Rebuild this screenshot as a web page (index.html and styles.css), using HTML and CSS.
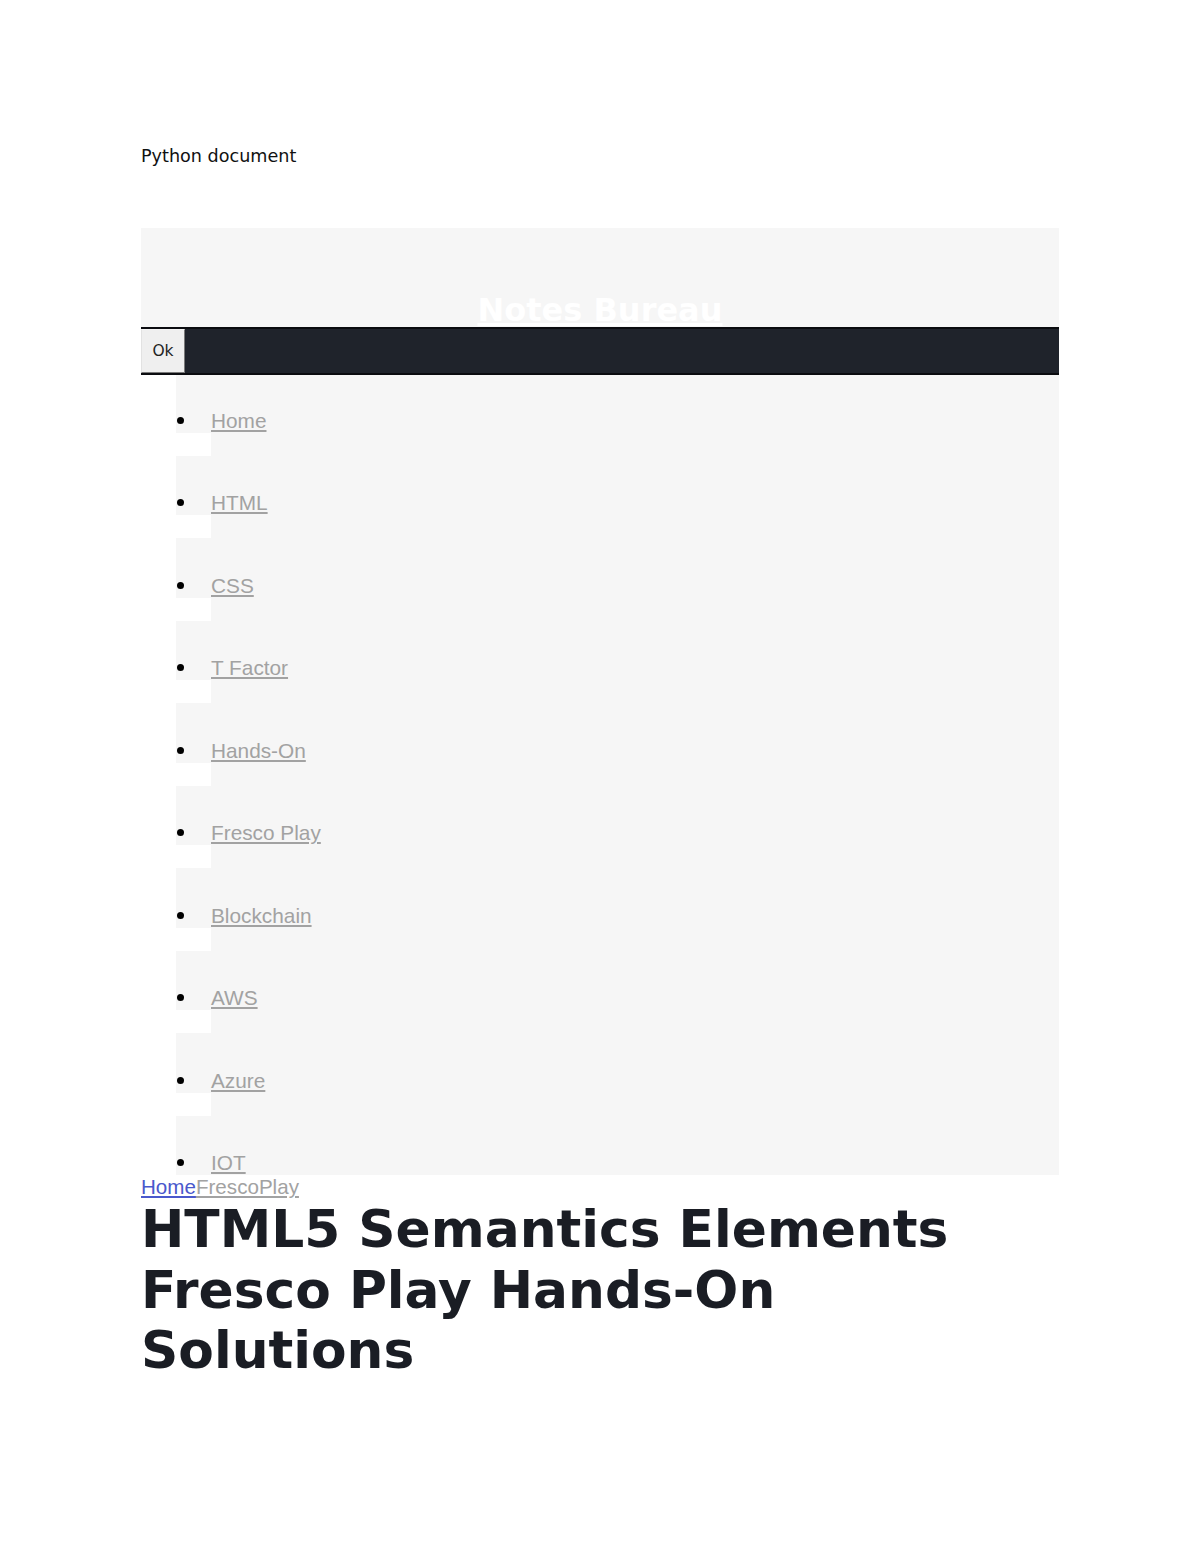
FILE: index.html
```html
<!DOCTYPE html>
<html lang="en">
<head>
<meta charset="utf-8">
<title>Python document</title>
<link rel="stylesheet" href="styles.css">
</head>
<body>
<div class="page">
  <p class="doc-title">Python document</p>
  <div class="site-header">
    <div class="brand"><a href="#" class="brand-link">Notes Bureau</a></div>
  </div>
  <div class="nav-bar">
    <button class="ok-btn" type="button">Ok</button>
  </div>
  <ul class="menu">
    <li class="menu-item"><div class="menu-row"><span class="dot"></span><a href="#">Home</a></div></li>
    <li class="menu-item"><div class="menu-row"><span class="dot"></span><a href="#">HTML</a></div></li>
    <li class="menu-item"><div class="menu-row"><span class="dot"></span><a href="#">CSS</a></div></li>
    <li class="menu-item"><div class="menu-row"><span class="dot"></span><a href="#">T Factor</a></div></li>
    <li class="menu-item"><div class="menu-row"><span class="dot"></span><a href="#">Hands-On</a></div></li>
    <li class="menu-item"><div class="menu-row"><span class="dot"></span><a href="#">Fresco Play</a></div></li>
    <li class="menu-item"><div class="menu-row"><span class="dot"></span><a href="#">Blockchain</a></div></li>
    <li class="menu-item"><div class="menu-row"><span class="dot"></span><a href="#">AWS</a></div></li>
    <li class="menu-item"><div class="menu-row"><span class="dot"></span><a href="#">Azure</a></div></li>
    <li class="menu-item"><div class="menu-row"><span class="dot"></span><a href="#">IOT</a></div></li>
  </ul>
  <div class="crumbs"><a href="#" class="crumb-home">Home</a><a href="#" class="crumb-cat">FrescoPlay</a></div>
  <h1 class="post-title">HTML5 Semantics Elements Fresco Play Hands-On Solutions</h1>
</div>
</body>
</html>
```

FILE: styles.css
```css
html, body {
  margin: 0;
  padding: 0;
  background: #ffffff;
}

body {
  font-family: "DejaVu Sans", sans-serif;
  color: #1b1d22;
}

.page {
  width: 918px;
  margin: 0 auto;
  padding-top: 146px;
}

.doc-title {
  margin: 0;
  font-size: 17.6px;
  line-height: 20.5px;
  color: #111;
}

.site-header {
  margin-top: 61.5px;
  height: 99px;
  background: #f6f6f6;
  display: flex;
  align-items: flex-end;
  justify-content: center;
  box-sizing: border-box;
}

.brand {
  font-family: "DejaVu Sans", sans-serif;
  font-weight: bold;
  font-size: 32px;
  line-height: 33px;
}

.brand-link {
  color: #ffffff;
  text-decoration: underline;
}

.nav-bar {
  height: 48px;
  box-sizing: border-box;
  background: #1f232b;
  border-top: 2px solid #0b0c10;
  border-bottom: 2px solid #0b0c10;
  display: flex;
}

.ok-btn {
  width: 44px;
  height: 44px;
  margin: 0;
  padding: 0;
  background: #efefef;
  border-style: solid;
  border-width: 1px;
  border-color: #f4f4f4 #7a7a7a #7a7a7a #e2e2e2;
  font-family: "DejaVu Sans", sans-serif;
  font-size: 15.5px;
  color: #222;
}

.menu {
  list-style: none;
  margin: 0 0 0 35px;
  padding: 32.5px 0 0 0;
  background: #f6f6f6;
}

.menu-item {
  padding-bottom: 34.56px;
}

.menu-item::after {
  content: "";
  display: block;
  width: 35px;
  height: 23px;
  background: #ffffff;
}

.menu-item:last-child {
  padding-bottom: 0;
}

.menu-item:last-child::after {
  display: none;
}

.menu-row {
  height: 25px;
  display: flex;
  align-items: center;
  font-family: "Liberation Sans", Arial, sans-serif;
  font-size: 20.8px;
  line-height: 25px;
}

.dot {
  width: 7px;
  height: 7px;
  border-radius: 50%;
  background: #000;
  margin-left: 1px;
  margin-right: 27px;
  flex: none;
}

.menu-row a {
  color: #a2a2a2;
  text-decoration: underline;
}

.crumbs {
  font-family: "Liberation Sans", Arial, sans-serif;
  font-size: 20.6px;
  line-height: 24px;
}

.crumb-home {
  color: #4a58cc;
  text-decoration: underline;
}

.crumb-cat {
  color: #a2a2a2;
  text-decoration: underline;
}

.post-title {
  margin: 0;
  font-family: "DejaVu Sans", sans-serif;
  font-weight: bold;
  font-size: 51.8px;
  line-height: 60.3px;
  color: #1a1d24;
}
```
